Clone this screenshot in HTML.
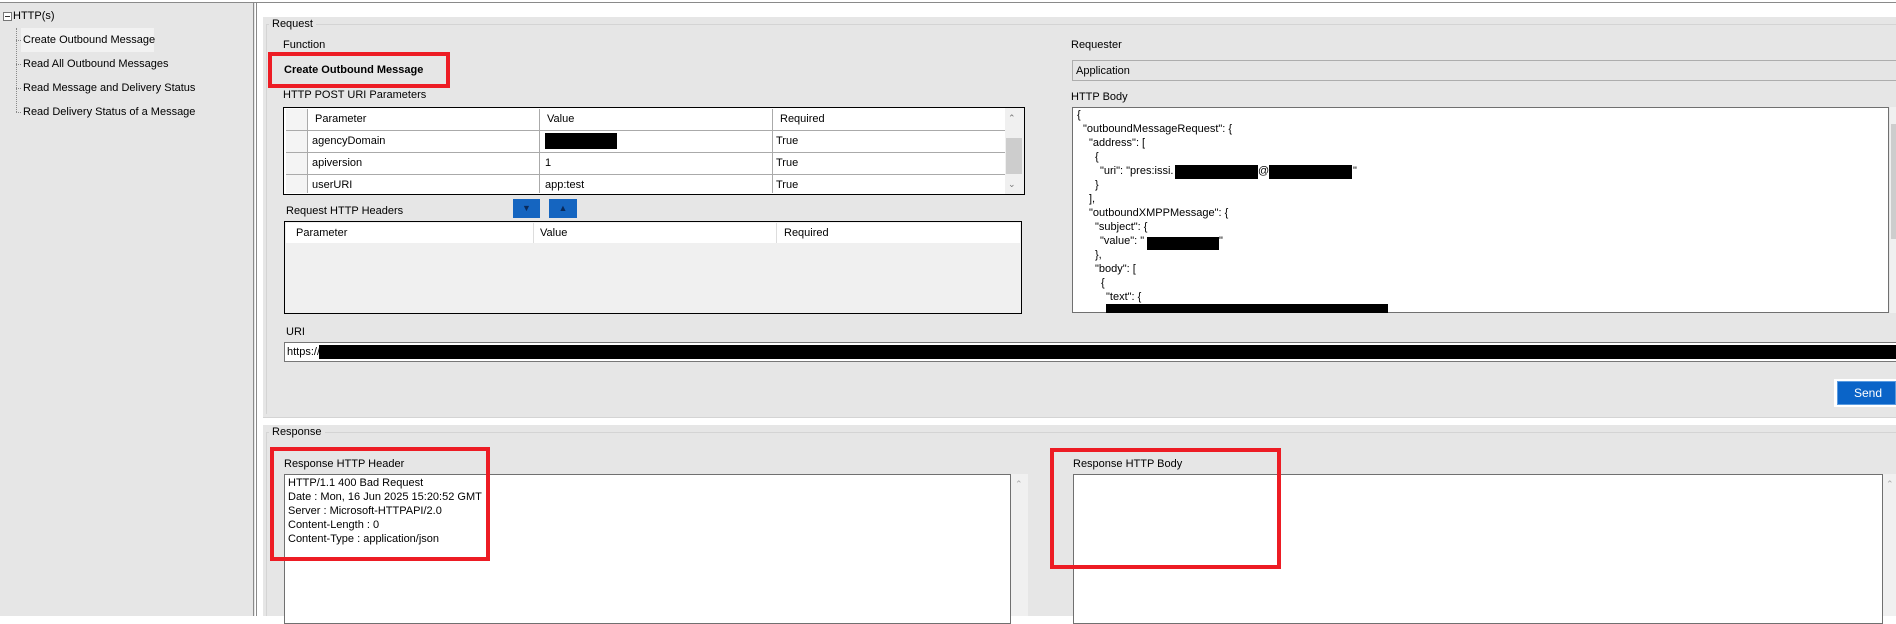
<!DOCTYPE html>
<html><head><meta charset="utf-8"><style>
*{margin:0;padding:0;box-sizing:border-box}
body{width:1896px;height:616px;overflow:hidden;background:#fff;font-family:"Liberation Sans",Arial,sans-serif;font-size:11px;color:#000;position:relative}
.a{position:absolute}
.t{position:absolute;white-space:pre;line-height:14px}
.red{position:absolute;border:4px solid #ed1c24}
.blk{position:absolute;background:#000}
</style></head><body>
<!-- top border -->
<div class="a" style="left:0;top:0;width:1896px;height:3px;background:#fff;border-bottom:1px solid #8a8a8a"></div>
<!-- left panel -->
<div class="a" style="left:0;top:3px;width:255px;height:613px;background:#e6e6e6"></div>
<div class="a" style="left:253px;top:3px;width:1px;height:613px;background:#8a8a8a"></div>
<div class="a" style="left:256px;top:3px;width:1px;height:613px;background:#8a8a8a"></div>
<div class="a" style="left:3px;top:12px;width:9px;height:9px;border:1px solid #777;background:#fff"></div>
<div class="a" style="left:5px;top:16px;width:5px;height:1px;background:#333"></div>
<div class="t" style="left:13px;top:9px">HTTP(s)</div>
<div class="a" style="left:16px;top:28px;width:0;height:84px;border-left:1px dotted #888"></div>
<div class="a" style="left:16px;top:40px;width:5px;border-top:1px dotted #888"></div>
<div class="a" style="left:16px;top:64px;width:5px;border-top:1px dotted #888"></div>
<div class="a" style="left:16px;top:88px;width:5px;border-top:1px dotted #888"></div>
<div class="a" style="left:16px;top:112px;width:5px;border-top:1px dotted #888"></div>
<div class="a" style="left:21px;top:28px;width:133px;height:24px;background:#f2f2f2"></div>
<div class="t" style="left:23px;top:33px">Create Outbound Message</div>
<div class="t" style="left:23px;top:57px">Read All Outbound Messages</div>
<div class="t" style="left:23px;top:81px">Read Message and Delivery Status</div>
<div class="t" style="left:23px;top:105px">Read Delivery Status of a Message</div>

<!-- request group -->
<div class="a" style="left:263px;top:17px;width:1633px;height:400px;background:#e6e6e6"></div>
<div class="a" style="left:266px;top:24px;width:1630px;height:1px;background:#d4d4d4"></div>
<div class="a" style="left:266px;top:24px;width:1px;height:390px;background:#d4d4d4"></div>
<div class="t" style="left:269px;top:17px;background:#e6e6e6;padding:0 3px">Request</div>
<div class="t" style="left:283px;top:38px">Function</div>
<div class="red" style="left:268px;top:52px;width:182px;height:36px"></div>
<div class="t" style="left:284px;top:63px;font-weight:bold">Create Outbound Message</div>
<div class="t" style="left:283px;top:88px">HTTP POST URI Parameters</div>
<!-- params table -->
<div class="a" style="left:283px;top:107px;width:742px;height:88px;border:1px solid #000;background:#fff"></div>
<div class="a" style="left:286px;top:109px;width:22px;height:84px;background:#f4f4f4;border-right:1px solid #aaa"></div>
<div class="a" style="left:286px;top:130px;width:719px;height:1px;background:#aaa"></div>
<div class="a" style="left:286px;top:152px;width:719px;height:1px;background:#aaa"></div>
<div class="a" style="left:286px;top:174px;width:719px;height:1px;background:#aaa"></div>
<div class="a" style="left:539px;top:109px;width:1px;height:84px;background:#aaa"></div>
<div class="a" style="left:772px;top:109px;width:1px;height:84px;background:#aaa"></div>
<div class="a" style="left:1005px;top:108px;width:19px;height:86px;background:#f0f0f0"></div>
<div class="a" style="left:1006px;top:138px;width:16px;height:36px;background:#cdcdcd"></div>
<div class="t" style="left:1008px;top:111px;color:#777;font-size:9px">&#8963;</div>
<div class="t" style="left:1008px;top:177px;color:#777;font-size:9px">&#8964;</div>
<div class="t" style="left:315px;top:112px">Parameter</div>
<div class="t" style="left:547px;top:112px">Value</div>
<div class="t" style="left:780px;top:112px">Required</div>
<div class="t" style="left:312px;top:134px">agencyDomain</div>
<div class="blk" style="left:545px;top:133px;width:72px;height:16px"></div>
<div class="t" style="left:776px;top:134px">True</div>
<div class="t" style="left:312px;top:156px">apiversion</div>
<div class="t" style="left:545px;top:156px">1</div>
<div class="t" style="left:776px;top:156px">True</div>
<div class="t" style="left:312px;top:178px">userURI</div>
<div class="t" style="left:545px;top:178px">app:test</div>
<div class="t" style="left:776px;top:178px">True</div>
<!-- headers -->
<div class="t" style="left:286px;top:204px">Request HTTP Headers</div>
<div class="a" style="left:513px;top:199px;width:27px;height:19px;background:#1565c0;color:#0a2a5a;font-size:9px;text-align:center;line-height:19px">&#9660;</div>
<div class="a" style="left:549px;top:199px;width:28px;height:19px;background:#1565c0;color:#0a2a5a;font-size:9px;text-align:center;line-height:19px">&#9650;</div>
<div class="a" style="left:284px;top:221px;width:738px;height:93px;border:1px solid #000;background:#f0f0f0"></div>
<div class="a" style="left:286px;top:223px;width:734px;height:20px;background:#fff"></div>
<div class="a" style="left:533px;top:223px;width:1px;height:20px;background:#ddd"></div>
<div class="a" style="left:776px;top:223px;width:1px;height:20px;background:#ddd"></div>
<div class="t" style="left:296px;top:226px">Parameter</div>
<div class="t" style="left:540px;top:226px">Value</div>
<div class="t" style="left:784px;top:226px">Required</div>
<!-- URI -->
<div class="t" style="left:286px;top:325px">URI</div>
<div class="a" style="left:284px;top:342px;width:1612px;height:20px;border:1px solid #777;border-right:none;background:#fff"></div>
<div class="t" style="left:287px;top:345px">https://</div>
<div class="blk" style="left:319px;top:345px;width:1577px;height:14px"></div>
<!-- requester -->
<div class="t" style="left:1071px;top:38px">Requester</div>
<div class="a" style="left:1072px;top:60px;width:824px;height:21px;border:1px solid #adadad;border-right:none;background:#e5e5e5"></div>
<div class="t" style="left:1076px;top:64px">Application</div>
<div class="t" style="left:1071px;top:90px">HTTP Body</div>
<div class="a" style="left:1072px;top:107px;width:817px;height:206px;border:1px solid #707070;background:#fff"></div>
<div class="a" style="left:1890px;top:107px;width:6px;height:206px;background:#f0f0f0"></div>
<div class="a" style="left:1891px;top:124px;width:5px;height:115px;background:#cdcdcd"></div>
<div class="t" style="left:1077px;top:108px">{</div>
<div class="t" style="left:1083px;top:122px">"outboundMessageRequest": {</div>
<div class="t" style="left:1089px;top:136px">"address": [</div>
<div class="t" style="left:1095px;top:150px">{</div>
<div class="t" style="left:1100px;top:164px">"uri": "pres:issi.</div>
<div class="blk" style="left:1175px;top:165px;width:83px;height:14px"></div>
<div class="t" style="left:1258px;top:164px">@</div>
<div class="blk" style="left:1269px;top:165px;width:83px;height:14px"></div>
<div class="t" style="left:1353px;top:164px">"</div>
<div class="t" style="left:1095px;top:178px">}</div>
<div class="t" style="left:1089px;top:192px">],</div>
<div class="t" style="left:1089px;top:206px">"outboundXMPPMessage": {</div>
<div class="t" style="left:1095px;top:220px">"subject": {</div>
<div class="t" style="left:1100px;top:234px">"value": "</div>
<div class="blk" style="left:1147px;top:237px;width:72px;height:13px"></div>
<div class="t" style="left:1219px;top:234px">"</div>
<div class="t" style="left:1095px;top:248px">},</div>
<div class="t" style="left:1095px;top:262px">"body": [</div>
<div class="t" style="left:1101px;top:276px">{</div>
<div class="t" style="left:1106px;top:290px">"text": {</div>
<div class="blk" style="left:1106px;top:304px;width:282px;height:9px"></div>
<!-- send -->
<div class="a" style="left:1834px;top:379px;width:62px;height:28px;background:#fff"></div>
<div class="a" style="left:1837px;top:381px;width:59px;height:24px;background:#0a64c8;border:1px solid #5a9be0;color:#fff;font-size:12px;line-height:22px;padding-left:16px">Send</div>

<!-- separator -->
<div class="a" style="left:263px;top:417px;width:1633px;height:8px;background:#fff;border-top:1px solid #d4d4d4"></div>
<!-- response group -->
<div class="a" style="left:263px;top:425px;width:1633px;height:191px;background:#e6e6e6"></div>
<div class="a" style="left:266px;top:432px;width:1630px;height:1px;background:#d4d4d4"></div>
<div class="a" style="left:266px;top:432px;width:1px;height:184px;background:#d4d4d4"></div>
<div class="t" style="left:269px;top:425px;background:#e6e6e6;padding:0 3px">Response</div>
<div class="t" style="left:284px;top:457px">Response HTTP Header</div>
<div class="a" style="left:284px;top:474px;width:727px;height:150px;border:1px solid #707070;background:#fff"></div>
<div class="a" style="left:1011px;top:474px;width:17px;height:142px;background:#f0f0f0"></div>
<div class="t" style="left:1015px;top:477px;color:#aaa;font-size:9px">&#8963;</div>
<div class="t" style="left:288px;top:476px">HTTP/1.1 400 Bad Request</div>
<div class="t" style="left:288px;top:490px">Date : Mon, 16 Jun 2025 15:20:52 GMT</div>
<div class="t" style="left:288px;top:504px">Server : Microsoft-HTTPAPI/2.0</div>
<div class="t" style="left:288px;top:518px">Content-Length : 0</div>
<div class="t" style="left:288px;top:532px">Content-Type : application/json</div>
<div class="red" style="left:270px;top:447px;width:220px;height:114px"></div>

<div class="t" style="left:1073px;top:457px">Response HTTP Body</div>
<div class="a" style="left:1073px;top:474px;width:810px;height:150px;border:1px solid #707070;background:#fff"></div>
<div class="a" style="left:1883px;top:474px;width:13px;height:142px;background:#f0f0f0"></div>
<div class="t" style="left:1886px;top:477px;color:#aaa;font-size:9px">&#8963;</div>
<div class="red" style="left:1050px;top:448px;width:231px;height:121px"></div>
</body></html>
